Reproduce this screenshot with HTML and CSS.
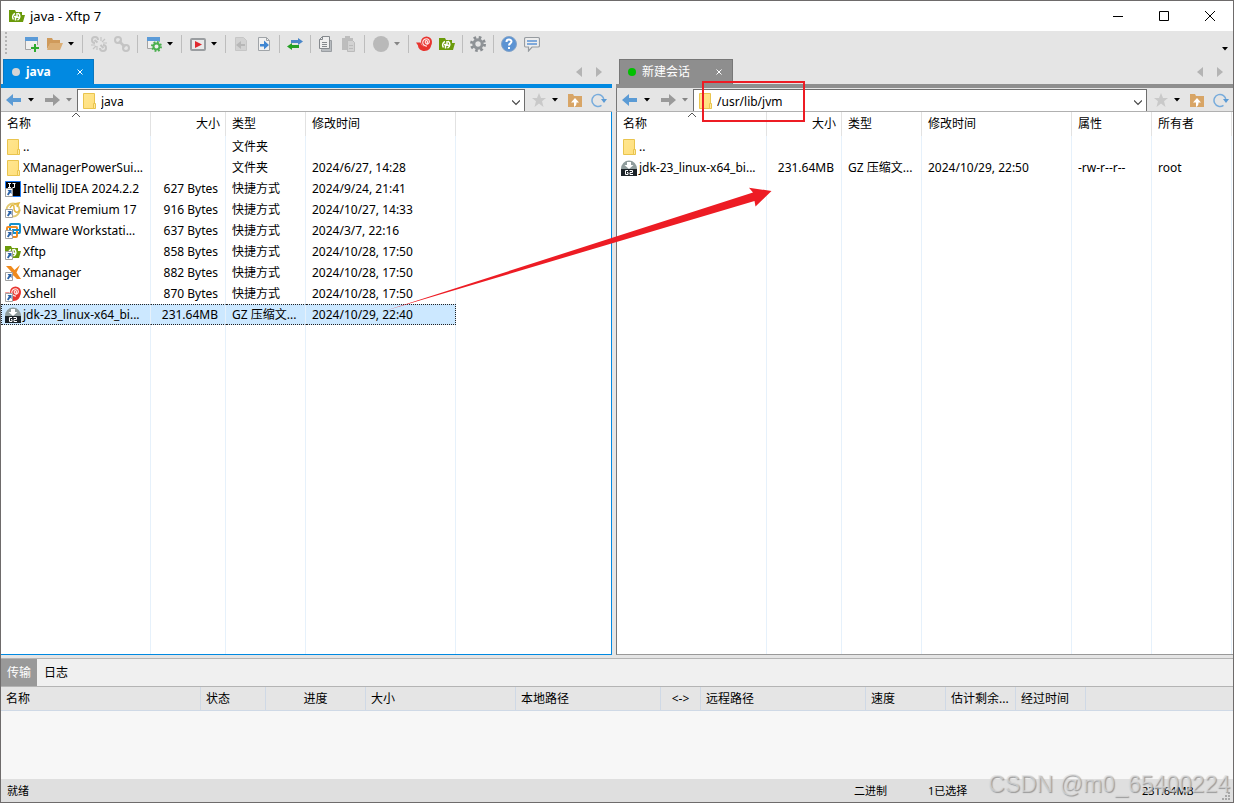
FILE: index.html
```html
<!DOCTYPE html>
<html lang="zh-CN">
<head>
<meta charset="utf-8">
<title>java - Xftp 7</title>
<link rel="stylesheet" href="styles.css">
</head>
<body>
<svg class="defs" aria-hidden="true">
  <defs>
    <linearGradient id="fold" x1="0" y1="0" x2="1" y2="1"><stop offset="0" stop-color="#ffe68f"/><stop offset="1" stop-color="#ffdf7c"/></linearGradient>
    <symbol id="i-xftp" viewBox="0 0 16 16"><path fill="#6a9a0a" d="M0 2h6l1 2h6v3h3l-2 7H0z"/><path fill="none" stroke="#fff" stroke-width="1.500" d="M4.500 11.500A3.800 3.800 0 0 1 6 5.500M9 5.200A3.800 3.800 0 0 1 8.500 12M6.500 12.500V8.500H5M8 5V9.200H10"/></symbol>
    <symbol id="i-new" viewBox="0 0 16 16"><path fill="#f0f0f0" stroke="#a3a3a3" d="M1.500 2.500h12v11h-12z"/><path fill="#5b9bd8" d="M1 1h13v4H1z"/><path fill="#e5e5e5" d="M7 9h9v7H7z"/><path fill="#2eab2e" d="M10 8h2v3h3v2h-3v3h-2v-3H7v-2h3z"/></symbol>
    <symbol id="i-open" viewBox="0 0 16 16"><path fill="#cf9a5b" d="M0 2h5l1 2h7v3H4L0 13z"/><path fill="#dbae75" d="M3 7h13l-3 7H0z"/></symbol>
    <symbol id="i-link" viewBox="0 0 16 16"><g fill="none" stroke="#c4c4c4" stroke-width="2"><circle cx="4" cy="4" r="3"/><circle cx="12" cy="12" r="3"/><path stroke-width="2.500" d="M5 5l6 6"/></g></symbol>
    <symbol id="i-unlink" viewBox="0 0 16 16"><g fill="none" stroke="#c4c4c4" stroke-width="2"><path d="M7 4a3 3 0 1 0-3 3M9 12a3 3 0 1 0 3-3M3.500 4l3 2.500M12.500 12l-3-3"/><path stroke-width="1.200" d="M10 5V1M11 6l3-3M12 7h4M6 10v4M5 10l-3 3M4 9H0"/></g></symbol>
    <symbol id="i-wingear" viewBox="0 0 16 16"><path fill="#f0f0f0" stroke="#a3a3a3" d="M1.500 2.500h12v10h-12z"/><path fill="#5b9bd8" d="M1 1h13v4H1z"/><circle cx="10.500" cy="10.500" r="5.500" fill="#e5e5e5"/><circle cx="10.500" cy="10.500" r="4.500" fill="none" stroke="#4caf50" stroke-width="2" stroke-dasharray="1.770 1.770"/><circle cx="10.500" cy="10.500" r="3" fill="#f0f0f0" stroke="#4caf50" stroke-width="2"/></symbol>
    <symbol id="i-play" viewBox="0 0 16 16"><rect x="1" y="3" width="14" height="11" rx="1" fill="#e9e9e9" stroke="#9a9da0" stroke-width="2"/><path fill="#e0282e" d="M5 5l7 3.500L5 12z"/></symbol>
    <symbol id="i-docl" viewBox="0 0 16 16"><path fill="#d2d2d2" stroke="#c6c6c6" d="M2.500 1.500h8l3 3v10h-11z"/><path fill="#b7b7b7" d="M3 9l5-4v3h4v2H8v3z"/></symbol>
    <symbol id="i-docr" viewBox="0 0 16 16"><path fill="#f1f1f1" stroke="#a0a4a8" d="M2.500 1.500h8l3 3v10h-11z"/><path fill="none" stroke="#a0a4a8" d="M10.500 1.500v3h3"/><path fill="#3f86d2" d="M13 9L8 4.500V8H4v2.500h4v3z"/></symbol>
    <symbol id="i-swap" viewBox="0 0 16 16"><path fill="#4a86c8" d="M4 4h7V2l5 3.500L11 9V7H4z"/><path fill="#25a025" d="M12 9H5V7l-5 3.500L5 14v-2h7z"/></symbol>
    <symbol id="i-copy" viewBox="0 0 16 16"><path fill="#b8bcc0" stroke="#9a9ea2" d="M5.500 4.500h8v11h-10v-2"/><path fill="#efefef" stroke="#85898d" d="M4.500.5h7v12h-10v-9zM4.500.5v3h-3M4 6.500h5M4 8.500h5M4 10.500h5"/></symbol>
    <symbol id="i-paste" viewBox="0 0 16 16"><path fill="#bdbdbd" d="M1 2h3V0h5v2h3v12H1z"/><path fill="#d2d2d2" stroke="#bbb" d="M6.500 4.500h5l2 2v9h-7zM8 9.500h4M8 12.500h4"/></symbol>
    <symbol id="i-disc" viewBox="0 0 16 16"><circle cx="8" cy="8" r="8" fill="#b9b9b9"/></symbol>
    <symbol id="i-xshell" viewBox="0 0 16 16"><circle cx="10.500" cy="6" r="5.500" fill="#e8352f"/><path fill="#e8352f" d="M0 6.500h4.500C5 9 7 11 10 11l5.500-4C15.500 12 12.500 15 8.500 15 5 15 2 12.500 2 9.500z"/><path fill="none" stroke="#ffe1df" stroke-width="1.200" d="M10.500 7a1.200 1.200 0 1 0-1.200-1.600c-.4 2 1.200 3.200 2.600 2.500 2.300-1 1.800-4.500-.6-5-3-.5-5 2-4.500 4.300.5 2 2.200 3 4.200 2.800"/></symbol>
    <symbol id="i-gear" viewBox="0 0 16 16"><circle cx="8" cy="8" r="6.500" fill="none" stroke="#8a8e92" stroke-width="3" stroke-dasharray="2.550 2.550"/><circle cx="8" cy="8" r="4.200" fill="#e5e5e5" stroke="#8f9397" stroke-width="3"/></symbol>
    <symbol id="i-help" viewBox="0 0 16 16"><circle cx="8" cy="8" r="7.500" fill="#5b93d3" stroke="#85a4c8"/><path fill="none" stroke="#fff" stroke-width="2" d="M5.500 6c0-3.300 5-3 5-.4C10.500 7.500 8 7.300 8 9.500"/><path fill="#fff" d="M7 11h2v2H7z"/></symbol>
    <symbol id="i-chat" viewBox="0 0 16 16"><path fill="#ededed" stroke="#969ba0" stroke-width="1.200" d="M2 1.500h12q1.500 0 1.500 1.500v6.500q0 1.500-1.500 1.500H8l-3.500 4V11H2Q.5 11 .5 9.500V3Q.5 1.500 2 1.500z"/><path stroke="#5b93d3" stroke-width="1.500" d="M3 5h10M3 8h10"/></symbol>
    <symbol id="i-caret" viewBox="0 0 6 4"><path fill="currentColor" d="M0 0h6L3 3.500z"/></symbol>
    <symbol id="i-back" viewBox="0 0 16 12"><path fill="#5b9bd5" d="M0 6l7-6v4h8v4H7v4z"/></symbol>
    <symbol id="i-fwd" viewBox="0 0 16 12"><path fill="#9a9a9a" d="M16 6L9 0v4H1v4h8v4z"/></symbol>
    <symbol id="i-star" viewBox="0 0 14 14"><path fill="#c9c9c9" d="M7 0l2 5h5l-4 3.200L11.500 14 7 10.500 2.500 14 4 8.200 0 5h5z"/></symbol>
    <symbol id="i-up" viewBox="0 0 14 14"><path fill="#d8a566" d="M0 1h5l1 2h8v11H0z"/><path fill="#fff" d="M7 5l4 4.500H8.500c0 2-.5 3.500-2.500 4.500V9.500H3z"/></symbol>
    <symbol id="i-refresh" viewBox="0 0 16 16"><path fill="none" stroke="#78acdc" stroke-width="1.500" d="M10.500 13.300A6 6 0 1 1 13 8"/><path fill="#5b9bd5" d="M10 7h6l-3 4z"/></symbol>
    <symbol id="i-folder" viewBox="0 0 16 16"><path fill="url(#fold)" stroke="#e9c44e" d="M2.500.5h11v11l.5 4H2.500z"/><path fill="#ffe9a0" stroke="#e9c44e" d="M12.500 10.500h2v5h-2z"/></symbol>
    <symbol id="i-short" viewBox="0 0 16 16"><path fill="#fff" stroke="#a0a0a0" d="M.5 7.500h7v8h-7z"/><path fill="#2a62a8" d="M2.500 9H6.500v4L5.300 11.800 3.500 14.500 2 13.500 3.800 10.500z"/></symbol>
    <symbol id="i-idea" viewBox="0 0 16 16"><path fill="#000" stroke="#1b78f0" d="M.5.500h15v15H.5z"/><path fill="none" stroke="#fff" d="M3 2.500h3M4.500 2v5M3 6.500h3M7.500 2.500h3M9.500 2v4.500h-2"/><use href="#i-short"/></symbol>
    <symbol id="i-navicat" viewBox="0 0 16 16"><circle cx="8" cy="8" r="6.500" fill="#fff" stroke="#e3ca72" stroke-width="2"/><path fill="none" stroke="#e3b840" stroke-width="1.500" d="M5 6c2-4 4-4 4 0s3 6 6 2M9 2l5-1-2 4"/><use href="#i-short"/></symbol>
    <symbol id="i-vmware" viewBox="0 0 16 16"><rect x="5" y="1" width="10" height="9" rx="1" fill="none" stroke="#1490cc" stroke-width="2"/><rect x="2" y="4" width="10" height="10" rx="1" fill="none" stroke="#ef8b22" stroke-width="2"/><path fill="none" stroke="#1490cc" stroke-width="2" d="M8 11V7h6"/><use href="#i-short"/></symbol>
    <symbol id="i-xftps" viewBox="0 0 16 16"><use href="#i-xftp"/><use href="#i-short"/></symbol>
    <symbol id="i-xman" viewBox="0 0 16 16"><path fill="#f08a1c" d="M1 1h5l3.500 4L15 0l-3.500 7.500L16 14h-4L8.500 10.500 4 14l3-6.500z"/><use href="#i-short"/></symbol>
    <symbol id="i-xshells" viewBox="0 0 16 16"><use href="#i-xshell"/><use href="#i-short"/></symbol>
    <symbol id="i-gz" viewBox="0 0 16 16"><path fill="#8f9c9c" d="M0 9a8 8.500 0 0 1 16 0z"/><path fill="#fff" d="M6 2h4v3h2.500L8 9 3.500 5H6z"/><path fill="#1c2328" d="M0 9h16v7H0z"/><path fill="none" stroke="#fff" d="M7 10.500H4.500v4H7V12.500H6M8.500 10.500h3v2h-2.500v2h3"/></symbol>
    <symbol id="i-tril" viewBox="0 0 6 10"><path fill="#b4b4b4" d="M6 0v10L0 5z"/></symbol>
    <symbol id="i-trir" viewBox="0 0 6 10"><path fill="#b4b4b4" d="M0 0v10l6-5z"/></symbol>
    <symbol id="i-x" viewBox="0 0 10 10"><path fill="none" stroke="currentColor" d="M0 0l10 10M10 0L0 10"/></symbol>
    <symbol id="i-xs" viewBox="0 0 6 6"><path fill="none" stroke="currentColor" d="M0.500.500l5 5M5.500.500l-5 5"/></symbol>
    <symbol id="i-chev" viewBox="0 0 8 6"><path fill="none" stroke="#444" stroke-width="1.200" d="M0 .5l4 4 4-4"/></symbol>
  </defs>
</svg>

<div class="window">
  <header class="titlebar">
    <svg class="ico"><use href="#i-xftp"/></svg>
    <h1 class="title">java - Xftp 7</h1>
    <button class="winbtn" aria-label="最小化"><svg class="win-ico" viewBox="0 0 10 10"><path stroke="#000" d="M0 5.500h10"/></svg></button>
    <button class="winbtn" aria-label="最大化"><svg class="win-ico" viewBox="0 0 10 10"><path fill="none" stroke="#000" d="M.5.500h9v9h-9z"/></svg></button>
    <button class="winbtn" aria-label="关闭"><svg class="win-ico"><use href="#i-x"/></svg></button>
  </header>

  <div class="toolbar" role="toolbar">
    <span class="grip"></span>
    <button class="tool" aria-label="新建"><svg class="ico"><use href="#i-new"/></svg></button>
    <button class="tool" aria-label="打开"><svg class="ico"><use href="#i-open"/></svg></button>
    <button class="drop" aria-label="打开菜单"><svg class="caret"><use href="#i-caret"/></svg></button>
    <span class="sep"></span>
    <button class="tool" aria-label="断开"><svg class="ico"><use href="#i-unlink"/></svg></button>
    <button class="tool" aria-label="连接"><svg class="ico"><use href="#i-link"/></svg></button>
    <span class="sep"></span>
    <button class="tool" aria-label="属性"><svg class="ico"><use href="#i-wingear"/></svg></button>
    <button class="drop" aria-label="属性菜单"><svg class="caret"><use href="#i-caret"/></svg></button>
    <span class="sep"></span>
    <button class="tool" aria-label="运行"><svg class="ico"><use href="#i-play"/></svg></button>
    <button class="drop" aria-label="运行菜单"><svg class="caret"><use href="#i-caret"/></svg></button>
    <span class="sep sep-tight"></span>
    <button class="tool" aria-label="传到左侧"><svg class="ico"><use href="#i-docl"/></svg></button>
    <button class="tool" aria-label="传到右侧"><svg class="ico"><use href="#i-docr"/></svg></button>
    <span class="sep sep-tight"></span>
    <button class="tool" aria-label="同步"><svg class="ico"><use href="#i-swap"/></svg></button>
    <span class="sep sep-tight"></span>
    <button class="tool" aria-label="复制"><svg class="ico"><use href="#i-copy"/></svg></button>
    <button class="tool" aria-label="粘贴"><svg class="ico"><use href="#i-paste"/></svg></button>
    <span class="sep"></span>
    <button class="tool" aria-label="停止"><svg class="ico"><use href="#i-disc"/></svg></button>
    <button class="drop dim" aria-label="停止菜单"><svg class="caret"><use href="#i-caret"/></svg></button>
    <span class="sep sep-tight"></span>
    <button class="tool" aria-label="Xshell"><svg class="ico"><use href="#i-xshell"/></svg></button>
    <button class="tool" aria-label="Xftp"><svg class="ico"><use href="#i-xftp"/></svg></button>
    <span class="sep sep-tight"></span>
    <button class="tool" aria-label="选项"><svg class="ico"><use href="#i-gear"/></svg></button>
    <span class="sep sep-tight"></span>
    <button class="tool" aria-label="帮助"><svg class="ico"><use href="#i-help"/></svg></button>
    <button class="tool" aria-label="反馈"><svg class="ico"><use href="#i-chat"/></svg></button>
    <button class="drop more" aria-label="更多"><svg class="caret"><use href="#i-caret"/></svg></button>
  </div>

  <main class="panes">
    <section class="pane pane-local">
      <div class="tabs">
        <div class="tab"><span class="dot"></span><span class="tab-name">java</span><button class="tab-x" aria-label="关闭标签"><svg class="x"><use href="#i-xs"/></svg></button></div>
        <button class="tabnav" aria-label="上一个"><svg class="tri"><use href="#i-tril"/></svg></button>
        <button class="tabnav" aria-label="下一个"><svg class="tri"><use href="#i-trir"/></svg></button>
      </div>
      <div class="pathbar">
        <button class="nav" aria-label="后退"><svg class="arrow"><use href="#i-back"/></svg></button>
        <button class="drop" aria-label="后退历史"><svg class="caret"><use href="#i-caret"/></svg></button>
        <button class="nav" aria-label="前进"><svg class="arrow"><use href="#i-fwd"/></svg></button>
        <button class="drop dim" aria-label="前进历史"><svg class="caret"><use href="#i-caret"/></svg></button>
        <div class="address"><svg class="ico"><use href="#i-folder"/></svg><input class="path" type="text" aria-label="本地路径" value="java"><button class="open" aria-label="展开"><svg class="chev"><use href="#i-chev"/></svg></button></div>
        <button class="side" aria-label="收藏"><svg class="ico14"><use href="#i-star"/></svg></button>
        <button class="drop" aria-label="收藏菜单"><svg class="caret"><use href="#i-caret"/></svg></button>
        <button class="side" aria-label="上级目录"><svg class="ico14"><use href="#i-up"/></svg></button>
        <button class="side" aria-label="刷新"><svg class="ico"><use href="#i-refresh"/></svg></button>
      </div>
      <div class="files">
        <table class="list">
          <colgroup><col class="c150"><col class="c75"><col class="c80"><col class="c150"><col></colgroup>
          <thead><tr><th class="sorted">名称<svg class="sort" viewBox="0 0 8 6"><path fill="none" stroke="#555" d="M0 5l4-4 4 4"/></svg></th><th class="num">大小</th><th>类型</th><th>修改时间</th><th class="end"></th></tr></thead>
          <tbody>
            <tr><td class="name"><svg class="ico"><use href="#i-folder"/></svg>..</td><td></td><td>文件夹</td><td></td><td class="end"></td></tr>
            <tr><td class="name"><svg class="ico"><use href="#i-folder"/></svg>XManagerPowerSui...</td><td></td><td>文件夹</td><td>2024/6/27, 14:28</td><td class="end"></td></tr>
            <tr><td class="name"><svg class="ico"><use href="#i-idea"/></svg>IntelliJ IDEA 2024.2.2</td><td class="num">627 Bytes</td><td>快捷方式</td><td>2024/9/24, 21:41</td><td class="end"></td></tr>
            <tr><td class="name"><svg class="ico"><use href="#i-navicat"/></svg>Navicat Premium 17</td><td class="num">916 Bytes</td><td>快捷方式</td><td>2024/10/27, 14:33</td><td class="end"></td></tr>
            <tr><td class="name"><svg class="ico"><use href="#i-vmware"/></svg>VMware Workstati...</td><td class="num">637 Bytes</td><td>快捷方式</td><td>2024/3/7, 22:16</td><td class="end"></td></tr>
            <tr><td class="name"><svg class="ico"><use href="#i-xftps"/></svg>Xftp</td><td class="num">858 Bytes</td><td>快捷方式</td><td>2024/10/28, 17:50</td><td class="end"></td></tr>
            <tr><td class="name"><svg class="ico"><use href="#i-xman"/></svg>Xmanager</td><td class="num">882 Bytes</td><td>快捷方式</td><td>2024/10/28, 17:50</td><td class="end"></td></tr>
            <tr><td class="name"><svg class="ico"><use href="#i-xshells"/></svg>Xshell</td><td class="num">870 Bytes</td><td>快捷方式</td><td>2024/10/28, 17:50</td><td class="end"></td></tr>
            <tr class="selected"><td class="name"><svg class="ico"><use href="#i-gz"/></svg>jdk-23_linux-x64_bi...</td><td class="num">231.64MB</td><td>GZ 压缩文...</td><td>2024/10/29, 22:40</td><td class="end"></td></tr>
            <tr class="rest"><td></td><td></td><td></td><td></td><td class="end"></td></tr>
          </tbody>
        </table>
      </div>
    </section>

    <section class="pane pane-remote">
      <div class="tabs">
        <div class="tab"><span class="dot"></span><span class="tab-name">新建会话</span><button class="tab-x" aria-label="关闭标签"><svg class="x"><use href="#i-xs"/></svg></button></div>
        <button class="tabnav" aria-label="上一个"><svg class="tri"><use href="#i-tril"/></svg></button>
        <button class="tabnav" aria-label="下一个"><svg class="tri"><use href="#i-trir"/></svg></button>
      </div>
      <div class="pathbar">
        <button class="nav" aria-label="后退"><svg class="arrow"><use href="#i-back"/></svg></button>
        <button class="drop" aria-label="后退历史"><svg class="caret"><use href="#i-caret"/></svg></button>
        <button class="nav" aria-label="前进"><svg class="arrow"><use href="#i-fwd"/></svg></button>
        <button class="drop dim" aria-label="前进历史"><svg class="caret"><use href="#i-caret"/></svg></button>
        <div class="address"><svg class="ico"><use href="#i-folder"/></svg><input class="path" type="text" aria-label="远程路径" value="/usr/lib/jvm"><button class="open" aria-label="展开"><svg class="chev"><use href="#i-chev"/></svg></button></div>
        <button class="side" aria-label="收藏"><svg class="ico14"><use href="#i-star"/></svg></button>
        <button class="drop" aria-label="收藏菜单"><svg class="caret"><use href="#i-caret"/></svg></button>
        <button class="side" aria-label="上级目录"><svg class="ico14"><use href="#i-up"/></svg></button>
        <button class="side" aria-label="刷新"><svg class="ico"><use href="#i-refresh"/></svg></button>
      </div>
      <div class="files">
        <table class="list">
          <colgroup><col class="c150"><col class="c75"><col class="c80"><col class="c150"><col class="c80"><col class="c80"><col></colgroup>
          <thead><tr><th class="sorted">名称<svg class="sort" viewBox="0 0 8 6"><path fill="none" stroke="#555" d="M0 5l4-4 4 4"/></svg></th><th class="num">大小</th><th>类型</th><th>修改时间</th><th>属性</th><th>所有者</th><th class="end"></th></tr></thead>
          <tbody>
            <tr><td class="name"><svg class="ico"><use href="#i-folder"/></svg>..</td><td></td><td></td><td></td><td></td><td></td><td class="end"></td></tr>
            <tr><td class="name"><svg class="ico"><use href="#i-gz"/></svg>jdk-23_linux-x64_bi...</td><td class="num">231.64MB</td><td>GZ 压缩文...</td><td>2024/10/29, 22:50</td><td>-rw-r--r--</td><td>root</td><td class="end"></td></tr>
            <tr class="rest"><td></td><td></td><td></td><td></td><td></td><td></td><td class="end"></td></tr>
          </tbody>
        </table>
      </div>
    </section>
  </main>

  <section class="transfers">
    <div class="btabs"><button class="btab active">传输</button><button class="btab">日志</button></div>
    <table class="queue">
      <colgroup><col class="q200"><col class="q65"><col class="q100"><col class="q150"><col class="q145"><col class="q40"><col class="q165"><col class="q80"><col class="q70"><col class="q70"><col></colgroup>
      <thead><tr><th>名称</th><th>状态</th><th class="mid">进度</th><th>大小</th><th>本地路径</th><th class="mid">&lt;-&gt;</th><th>远程路径</th><th>速度</th><th>估计剩余...</th><th>经过时间</th><th class="end"></th></tr></thead>
    </table>
  </section>

  <footer class="status">
    <span class="st-ready">就绪</span><span class="st-mode">二进制</span><span class="st-sel">1已选择</span><span class="st-size">231.64MB</span>
    <svg class="resize" viewBox="0 0 10 10"><path fill="#a8a8a8" d="M6 0h2v2H6zM3 3h2v2H3zM6 3h2v2H6zM0 6h2v2H0zM3 6h2v2H3zM6 6h2v2H6z"/></svg>
  </footer>

  <svg class="pointer" viewBox="0 0 390 126" aria-hidden="true"><path fill="#ed1c24" d="M2 123.500L369 5.500 365 .7 387.500 4 371.500 19.500 370.500 14z"/></svg>
  <span class="marker"></span>
  <span class="watermark">CSDN @m0_65400224</span>
</div>
</body>
</html>
```
FILE: styles.css
```css
* { box-sizing: border-box; }

body {
  margin: 0;
  font: 12px/20px "Noto Sans", "Noto Sans CJK SC", sans-serif;
  color: #000;
}

button {
  display: flex;
  align-items: center;
  justify-content: center;
  padding: 0;
  border: 0;
  background: none;
  font: inherit;
  color: inherit;
}

svg { display: block; flex: none; }
.defs { position: absolute; width: 0; height: 0; }
.ico { width: 16px; height: 16px; }
.ico14 { width: 14px; height: 14px; }
.caret { width: 6px; height: 4px; }
.arrow { width: 16px; height: 12px; }
.chev { width: 8px; height: 6px; }
.tri { width: 6px; height: 10px; }
.x { width: 6px; height: 6px; }
.win-ico { width: 10px; height: 10px; }

.window {
  position: relative;
  display: flex;
  flex-direction: column;
  height: 100vh;
  border: 1px solid #6e6b6b;
  background: #e5e5e5;
  overflow: hidden;
}

/* title bar */
.titlebar {
  display: flex;
  align-items: center;
  height: 30px;
  padding-left: 8px;
  background: #fff;
}
.title { flex: 1; margin: 0 0 0 5px; font-size: 13px; font-weight: 400; }
.winbtn { width: 46px; height: 30px; }

/* toolbar */
.toolbar { display: flex; align-items: center; height: 25px; padding-right: 3px; }
.grip {
  width: 2px;
  height: 24px;
  margin: 0 13px 0 4px;
  background: repeating-linear-gradient(#b4b4b4 0 2px, #e5e5e5 2px 4px);
}
.tool { width: 23px; height: 24px; }
.drop { width: 10px; height: 20px; }
.toolbar .drop { margin-right: 2px; }
.toolbar .more { margin: 10px 0 0 auto; }
.dim { color: #858585; }
.sep { width: 9px; height: 18px; background: linear-gradient(90deg, transparent 4px, #bdbdbd 4px 5px, transparent 5px); }
.sep-tight { width: 8px; }

/* panes */
.panes {
  flex: 1;
  min-height: 0;
  display: grid;
  grid-template-columns: 611fr 617fr;
  gap: 4px;
}
.pane { display: flex; flex-direction: column; min-width: 0; min-height: 0; }
.tabs {
  display: flex;
  align-items: center;
  height: 32px;
  padding: 3px 3px 0 2px;
  border-bottom: 4px solid;
}
.tab {
  display: flex;
  align-items: center;
  height: 25px;
  margin-right: auto;
  padding: 0 10px 0 8px;
  color: #fff;
  border: 1px solid;
  border-bottom: 0;
}
.dot { width: 8px; height: 8px; margin-right: 6px; border-radius: 50%; }
.tab-name { flex: 1; }
.tab-x { width: 6px; height: 20px; }
.tabnav { width: 20px; height: 20px; }

.pane-local .tabs { border-color: #0189e1; }
.pane-local .tab { width: 91px; background: #0189e1; border-color: #0a77bf; font-weight: 700; }
.pane-local .dot { background: #d5d5d5; }
.pane-remote .tabs { padding-left: 3px; border-color: #8e8e8e; }
.pane-remote .tab { width: 114px; background: #8e8e8e; border-color: #777; }
.pane-remote .dot { background: #00c000; }

.pathbar {
  display: flex;
  align-items: center;
  height: 24px;
  padding: 0 1px;
  border-bottom: 1px solid #b0b0b0;
}
.pane-local .pathbar { padding-right: 2px; }
.pane-remote .pathbar, .pane-remote .files { border-left: 1px solid #777; }
.nav { width: 24px; height: 22px; }
.drop + .nav { margin-left: 4px; }
.address {
  flex: 1;
  display: flex;
  align-items: center;
  min-width: 0;
  height: 22px;
  margin: 1px 3px 0;
  padding: 1px 0 0 3px;
  background: #fff;
  border: 1px solid #6e6e6e;
  border-bottom: 0;
}
.path {
  flex: 1;
  min-width: 0;
  height: 20px;
  padding: 2px 4px 0;
  border: 0;
  outline: 0;
  background: none;
  font: inherit;
}
.open { width: 16px; height: 20px; padding-top: 4px; }
.side { width: 22px; height: 22px; }
.side + .drop { margin-right: 4px; }
.side + .side { margin-left: 2px; }

/* file lists */
.files { flex: 1; min-height: 0; display: grid; background: #fff; overflow: hidden; }
.pane-local .files { border-right: 1px solid #0189e1; border-bottom: 1px solid #0189e1; }
.pane-remote .files { border-bottom: 1px solid #999; }
.list { width: 100%; height: 100%; table-layout: fixed; border-collapse: separate; border-spacing: 0; }
.c75 { width: 75px; }
.c80 { width: 80px; }
.c150 { width: 150px; }
.list th {
  position: relative;
  height: 24px;
  padding: 0 5px 0 6px;
  text-align: left;
  font-weight: 400;
  border-right: 1px solid #e2e2e2;
}
.list td {
  height: 21px;
  padding: 0 7px 0 6px;
  white-space: nowrap;
  border-right: 1px solid #e6f1fb;
}
.list .num { text-align: right; }
.list .end { border-right: 0; }
.list .name { padding: 0 0 0 4px; }
.name .ico { float: left; margin: 2px 2px 0 0; }
.list .rest td { height: 100%; }
.sort { position: absolute; top: 0; left: 50%; width: 8px; height: 6px; margin-left: -4px; }
.list .selected td { background: #cce8ff; border-top: 1px dotted #222; border-bottom: 1px dotted #222; line-height: 18px; }
.list .selected td:first-child { border-left: 1px dotted #222; padding-left: 3px; }
.list .selected td:nth-child(4) { border-right: 1px dotted #222; }
.list .selected .end { background: none; border: 0; }
.selected .ico { margin-top: 1px; }

/* transfer queue */
.transfers {
  height: 124px;
  padding-top: 3px;
  background: #f7f7f7;
  box-shadow: inset 0 3px #e5e5e5;
}
.btabs { display: flex; height: 29px; background: #f0f0f0; border: 1px solid #b4b4b4; border-width: 1px 0; }
.btab { padding: 0 7px; }
.btab.active { padding: 0 6px; background: #999; color: #fff; }
.queue { width: 100%; table-layout: fixed; border-collapse: separate; border-spacing: 0; background: #e5e5e5; }
.queue th {
  height: 24px;
  padding: 0 5px;
  text-align: left;
  font-weight: 400;
  white-space: nowrap;
  border: 1px solid #cfd9e6;
  border-width: 0 1px 1px 0;
}
.queue .mid { text-align: center; }
.queue .end { border-right: 0; }
.q40 { width: 40px; }
.q65 { width: 65px; }
.q70 { width: 70px; }
.q80 { width: 80px; }
.q100 { width: 100px; }
.q145 { width: 145px; }
.q150 { width: 150px; }
.q165 { width: 165px; }
.q200 { width: 200px; }

/* status bar */
.status { display: flex; align-items: center; height: 23px; padding: 0 1px 0 6px; font-size: 11px; background: #dfdfdf; }
.st-ready { flex: 1; }
.st-mode { width: 74px; }
.st-sel { width: 214px; }
.st-size { width: 80px; }
.resize { width: 10px; height: 10px; align-self: flex-end; }

/* annotations drawn over the window */
.pointer { position: absolute; left: 383px; top: 186px; width: 390px; height: 126px; }
.marker { position: absolute; left: 701px; top: 80px; width: 103px; height: 41px; border: 2px solid #ed1c24; }
.watermark {
  position: absolute;
  right: 3px;
  bottom: 2px;
  font: 23px/32px "Liberation Sans", sans-serif;
  color: rgba(222, 222, 222, .65);
  text-shadow: 1px 1px 1px #999;
}
```
